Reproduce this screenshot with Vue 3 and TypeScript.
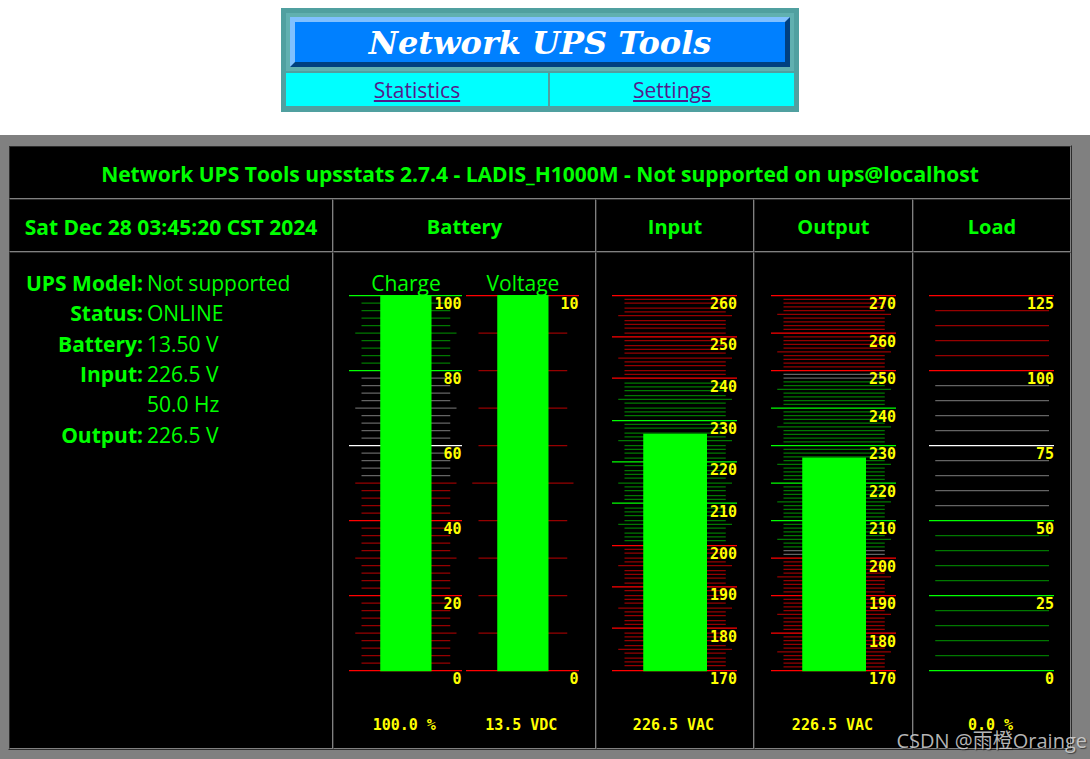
<script setup lang="ts">
type Zone = 'ok' | 'neutral' | 'warn'

interface Gauge {
  id: string
  caption: string
  width: number
  min: number
  max: number
  step: number
  mid: number
  major: number
  label: number
  value: number
  summary: string
  zone: (v: number) => Zone
}

interface Tick {
  value: number
  x: number
  y: number
  width: number
  tone: string
}

const SCALE = 1.25
const SCALE_HEIGHT = 300

const gauges: Record<string, Gauge[]> = {
  battery: [
    {
      id: 'charge', caption: 'Charge', width: 90, min: 0, max: 100, step: 2, mid: 10, major: 20, label: 20,
      value: 100, summary: '100.0 %',
      zone: (v) => (v >= 80 ? 'ok' : v > 50 ? 'neutral' : 'warn'),
    },
    {
      id: 'voltage', caption: 'Voltage', width: 90, min: 0, max: 10, step: 1, mid: 5, major: 10, label: 10,
      value: 10, summary: '13.5 VDC',
      zone: () => 'warn',
    },
  ],
  input: [
    {
      id: 'input', caption: '', width: 100, min: 170, max: 260, step: 1, mid: 5, major: 10, label: 10,
      value: 226.5, summary: '226.5 VAC',
      zone: (v) => (v >= 240 || v <= 200 ? 'warn' : 'ok'),
    },
  ],
  output: [
    {
      id: 'output', caption: '', width: 100, min: 170, max: 270, step: 1, mid: 5, major: 10, label: 10,
      value: 226.5, summary: '226.5 VAC',
      zone: (v) => (v >= 250 || v <= 200 ? 'warn' : v > 247 || v < 203 ? 'neutral' : 'ok'),
    },
  ],
  load: [
    {
      id: 'load', caption: '', width: 100, min: 0, max: 125, step: 5, mid: 5, major: 25, label: 25,
      value: 0, summary: '0.0 %',
      zone: (v) => (v >= 100 ? 'warn' : v > 50 ? 'neutral' : 'ok'),
    },
  ],
}

const columns = ['battery', 'input', 'output', 'load']

function level(g: Gauge, v: number): number {
  return Math.floor(((g.max - v) * SCALE_HEIGHT) / (g.max - g.min)) * SCALE
}

function ticks(g: Gauge): Tick[] {
  const out: Tick[] = []
  for (let v = g.min; v <= g.max; v += g.step) {
    const isMajor = v % g.major === 0
    const inset = isMajor ? 0 : v % g.mid === 0 ? 5 : 10
    out.push({
      value: v,
      x: inset * SCALE,
      y: level(g, v),
      width: (g.width - inset * 2 + 1) * SCALE,
      tone: `${g.zone(v)}-${isMajor ? 'major' : 'minor'}`,
    })
  }
  return out
}

function labels(g: Gauge): Tick[] {
  return ticks(g).filter((t) => t.value % g.label === 0)
}

const status = [
  { name: 'UPS Model:', value: 'Not supported' },
  { name: 'Status:', value: 'ONLINE' },
  { name: 'Battery:', value: '13.50 V' },
  { name: 'Input:', value: '226.5 V' },
  { name: '', value: '50.0 Hz' },
  { name: 'Output:', value: '226.5 V' },
]
</script>

<template>
  <div class="page">
    <header class="top">
      <div class="menu">
        <div class="brand"><h1 class="banner">Network UPS Tools</h1></div>
        <nav class="links">
          <div class="link"><a href="#statistics">Statistics</a></div>
          <div class="link"><a href="#settings">Settings</a></div>
        </nav>
      </div>
    </header>

    <main class="body">
      <table class="stats">
        <colgroup>
          <col />
          <col class="col-battery" />
          <col class="col-gauge" />
          <col class="col-output" />
          <col class="col-gauge" />
        </colgroup>
        <thead>
          <tr>
            <th class="cell" colspan="5">Network UPS Tools upsstats 2.7.4 - LADIS_H1000M - Not supported on ups@localhost</th>
          </tr>
          <tr>
            <th class="cell">Sat Dec 28 03:45:20 CST 2024</th>
            <th class="cell group">Battery</th>
            <th class="cell group">Input</th>
            <th class="cell group">Output</th>
            <th class="cell group">Load</th>
          </tr>
        </thead>
        <tbody>
          <tr>
            <td class="cell info">
              <table class="details">
                <tbody>
                  <tr v-for="row in status" :key="row.name">
                    <th scope="row">{{ row.name }}</th>
                    <td>{{ row.value }}</td>
                  </tr>
                </tbody>
              </table>
            </td>
            <td v-for="c in columns" :key="c" class="cell charts">
              <div class="row">
                <figure v-for="g in gauges[c]" :key="g.id" class="gauge">
                  <figcaption>{{ g.caption }}</figcaption>
                  <svg :width="Math.ceil(g.width * SCALE)" height="438" role="img" :aria-label="g.summary">
                    <rect
                      v-for="t in ticks(g)"
                      :key="t.value"
                      :class="t.tone"
                      :x="t.x"
                      :y="t.y"
                      :width="t.width"
                      :height="SCALE"
                    />
                    <rect
                      v-if="g.value > g.min"
                      class="bar"
                      :x="25 * SCALE"
                      :y="level(g, g.value)"
                      :width="(g.width - 49) * SCALE"
                      :height="(SCALE_HEIGHT + 1) * SCALE - level(g, g.value)"
                    />
                    <text
                      v-for="t in labels(g)"
                      :key="t.value"
                      :x="g.width * SCALE"
                      :y="t.y + 14"
                      text-anchor="end"
                    >{{ t.value }}</text>
                    <text :x="g.width * SCALE / 2 - 1" y="435" text-anchor="middle">{{ g.summary }}</text>
                  </svg>
                </figure>
              </div>
            </td>
          </tr>
        </tbody>
      </table>
      <span class="credit">CSDN @雨橙Orainge</span>
    </main>
  </div>
</template>

<style>
body {
  margin: 0;
  background: #fff;
}
</style>

<style scoped>
.page {
  font-family: "Open Sans", "Noto Sans", sans-serif;
  font-size: 21px;
  line-height: 24px;
}

.top {
  display: flex;
  justify-content: center;
  padding: 8px 18px 23px 8px;
}

.menu {
  display: flex;
  flex-direction: column;
  gap: 2px;
  padding: 5px 5px 6px;
  background: #50a0a0;
}

.brand {
  padding: 4px;
  background: #60b0b0;
}

.banner {
  box-sizing: border-box;
  width: 500px;
  height: 50px;
  margin: 0;
  border: 5px solid;
  border-color: #80c0ff #004080 #004080 #80c0ff;
  background: #0080ff;
  color: #fff;
  font: italic bold 32px/42px "DejaVu Serif", serif;
  text-align: center;
}

.links {
  display: grid;
  grid-template-columns: 262fr 244fr;
  gap: 2px;
}

.link {
  height: 33px;
  background: #0ff;
  line-height: 34px;
  text-align: center;
}

.link a {
  color: #551a8b;
}

.body {
  position: relative;
  padding: 10px 18px 9px 8px;
  background: #808080;
}

.stats {
  width: 100%;
  table-layout: fixed;
  border-collapse: separate;
  border-spacing: 0;
  border: 1px solid;
  border-color: #808080 #2c2c2c #2c2c2c #808080;
  background: #000;
  color: #0f0;
}

.col-battery {
  width: 263px;
}

.col-gauge {
  width: 158px;
}

.col-output {
  width: 159px;
}

.cell {
  padding: 0;
  border: 1px solid;
  border-color: #2c2c2c #808080 #808080 #2c2c2c;
  vertical-align: top;
}

th.cell {
  height: 49px;
  padding-top: 2px;
  vertical-align: middle;
}

.group {
  font-size: 20px;
}

.info {
  padding: 15px 0 0 14px;
}

.details {
  height: 182px;
  border-collapse: collapse;
}

.details th,
.details td {
  padding: 0 2px;
  text-align: left;
  white-space: nowrap;
}

.details th {
  text-align: right;
}

.charts {
  padding: 18px 0 15px;
}

.row {
  display: flex;
  justify-content: center;
  gap: 4px;
}

.gauge {
  margin: 0;
  text-align: center;
}

.gauge figcaption {
  height: 24px;
}

.gauge svg {
  display: block;
}

.gauge text {
  fill: #ff0;
  font: bold 15px "DejaVu Sans Mono", monospace;
}

.bar,
.ok-major {
  fill: #0f0;
}

.ok-minor {
  fill: #007800;
}

.neutral-major {
  fill: #fff;
}

.neutral-minor {
  fill: #646464;
}

.warn-major {
  fill: #f00;
}

.warn-minor {
  fill: #960000;
}

.credit {
  position: absolute;
  right: 3px;
  bottom: 6px;
  color: rgba(215, 215, 215, 0.85);
  font-family: "Open Sans", "Noto Sans CJK SC", sans-serif;
  font-size: 20px;
  text-shadow: 1px 1px 1px rgba(0, 0, 0, 0.5);
}
</style>
